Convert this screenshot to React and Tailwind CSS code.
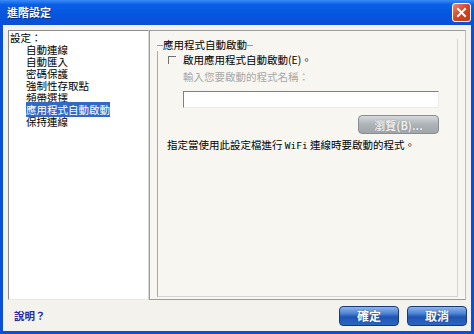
import React from "react";

const font = { fontFamily: '"Noto Sans CJK TC", "Noto Sans", sans-serif' };

export default function App() {
  const items = ["自動連線", "自動匯入", "密碼保護", "強制性存取點", "頻帶選擇", "應用程式自動啟動", "保持連線"];
  return (
    <div className="w-[474px] h-[334px] flex flex-col bg-[#0a4fd8] overflow-hidden" style={font}>
      {/* title bar */}
      <div className="h-[25px] shrink-0 flex items-center justify-between pl-[7px] pr-[3px] bg-[linear-gradient(#3d8bf7_0%,#0a5fe6_18%,#0655e0_60%,#0a4fd6_100%)]">
        <span className="text-white font-bold text-[11px] leading-none [text-shadow:1px_1px_0_#0a2a80]">進階設定</span>
        <div className="w-[19px] h-[19px] rounded-[3px] border border-white bg-[linear-gradient(135deg,#f08a6a,#d8431c_50%,#c23a14)] flex items-center justify-center">
          <svg width="11" height="11" viewBox="0 0 11 11">
            <path d="M2 2 L9 9 M9 2 L2 9" stroke="white" strokeWidth="2" strokeLinecap="square" />
          </svg>
        </div>
      </div>
      {/* body */}
      <div className="flex-1 mx-[3px] mb-[3px] bg-[#f3f2ec] flex flex-col">
        <div className="flex mt-[5px] ml-[5px] mr-[5px] h-[270px]">
          {/* left list */}
          <div className="w-[141px] h-full bg-white border-t border-l border-[#8d8d8d] border-r border-r-[#d8d8d8] border-b border-b-[#e8e8e8] pt-[1px] text-[10.5px] leading-[12px] text-black">
            <div className="pl-[1px]">設定：</div>
            {items.map((t, i) => (
              <div key={t} className="pl-[17px]">
                <span className={i === 5 ? "bg-[#316ac5] text-white px-[0px]" : ""}>{t}</span>
              </div>
            ))}
          </div>
          {/* right panel */}
          <div className="flex-1 h-full border border-[#9c9c9c] border-r-[#bdbdbd] bg-[#f7f6f1] flex pl-[7px] pr-[7px] pt-[8px] pb-[2px]">
            <div className="flex-1 flex flex-col border-r border-[#d4d4d4]">
              <div className="flex items-center h-[12px]">
                <div className="w-[6px] border-t border-[#9a9a9a]" />
                <span className="text-[10.5px] leading-[12px] text-black">應用程式自動啟動</span>
                <div className="w-[6px] border-t border-[#9a9a9a]" />
              </div>
              <div className="flex-1 border-l border-b border-[#a8a8a8] border-b-[#d4d4d4] pl-[10px] pt-[3px] text-[10.5px] leading-[12px]">
                <div className="flex items-center gap-[7px]">
                  <div className="w-[8px] h-[8px] border-t border-l border-[#707070]" />
                  <span className="text-black">啟用應用程式自動啟動(E)。</span>
                </div>
                <div className="pl-[15px] mt-[5px] text-[#a8a8a8]">輸入您要啟動的程式名稱：</div>
                <div className="ml-[15px] mt-[8px] w-[256px] h-[17px] bg-white border-t border-l border-[#808080] border-r border-r-[#ececec] border-b border-b-[#ececec]" />
                <div className="flex justify-end w-[271px] mt-[7px]">
                  <div className="w-[81px] h-[19px] rounded-[4px] border border-[#8a8e92] bg-[linear-gradient(#d6d9dc,#aeb3b8_50%,#a0a5aa)] flex items-center justify-center text-[11px] text-[#eef0f2] font-bold [text-shadow:0_0_1px_#6f7478]">
                    瀏覽(B)...
                  </div>
                </div>
                <div className="mt-[5px] -ml-[1px] text-black whitespace-nowrap">
                  指定當使用此設定檔進行 <span style={{ fontFamily: '"DejaVu Sans Mono", monospace' }} className="text-[9.5px]">WiFi</span> 連線時要啟動的程式。
                </div>
              </div>
            </div>
          </div>
        </div>
        {/* footer */}
        <div className="flex-1 flex items-center justify-between pl-[11px] pr-[4px]">
          <span className="text-[10.5px] text-[#2a2a9a] font-bold">說明？</span>
          <div className="flex gap-[8px]">
            {["確定", "取消"].map((t) => (
              <div key={t} className="w-[60px] h-[20px] rounded-[4px] border border-[#163a78] bg-[linear-gradient(#8fb4ea_0%,#4f86d6_35%,#1f55b0_55%,#2a66c4_100%)] flex items-center justify-center text-white font-bold text-[12px] [text-shadow:0_0_1px_#0b2a66]">
                {t}
              </div>
            ))}
          </div>
        </div>
      </div>
    </div>
  );
}
